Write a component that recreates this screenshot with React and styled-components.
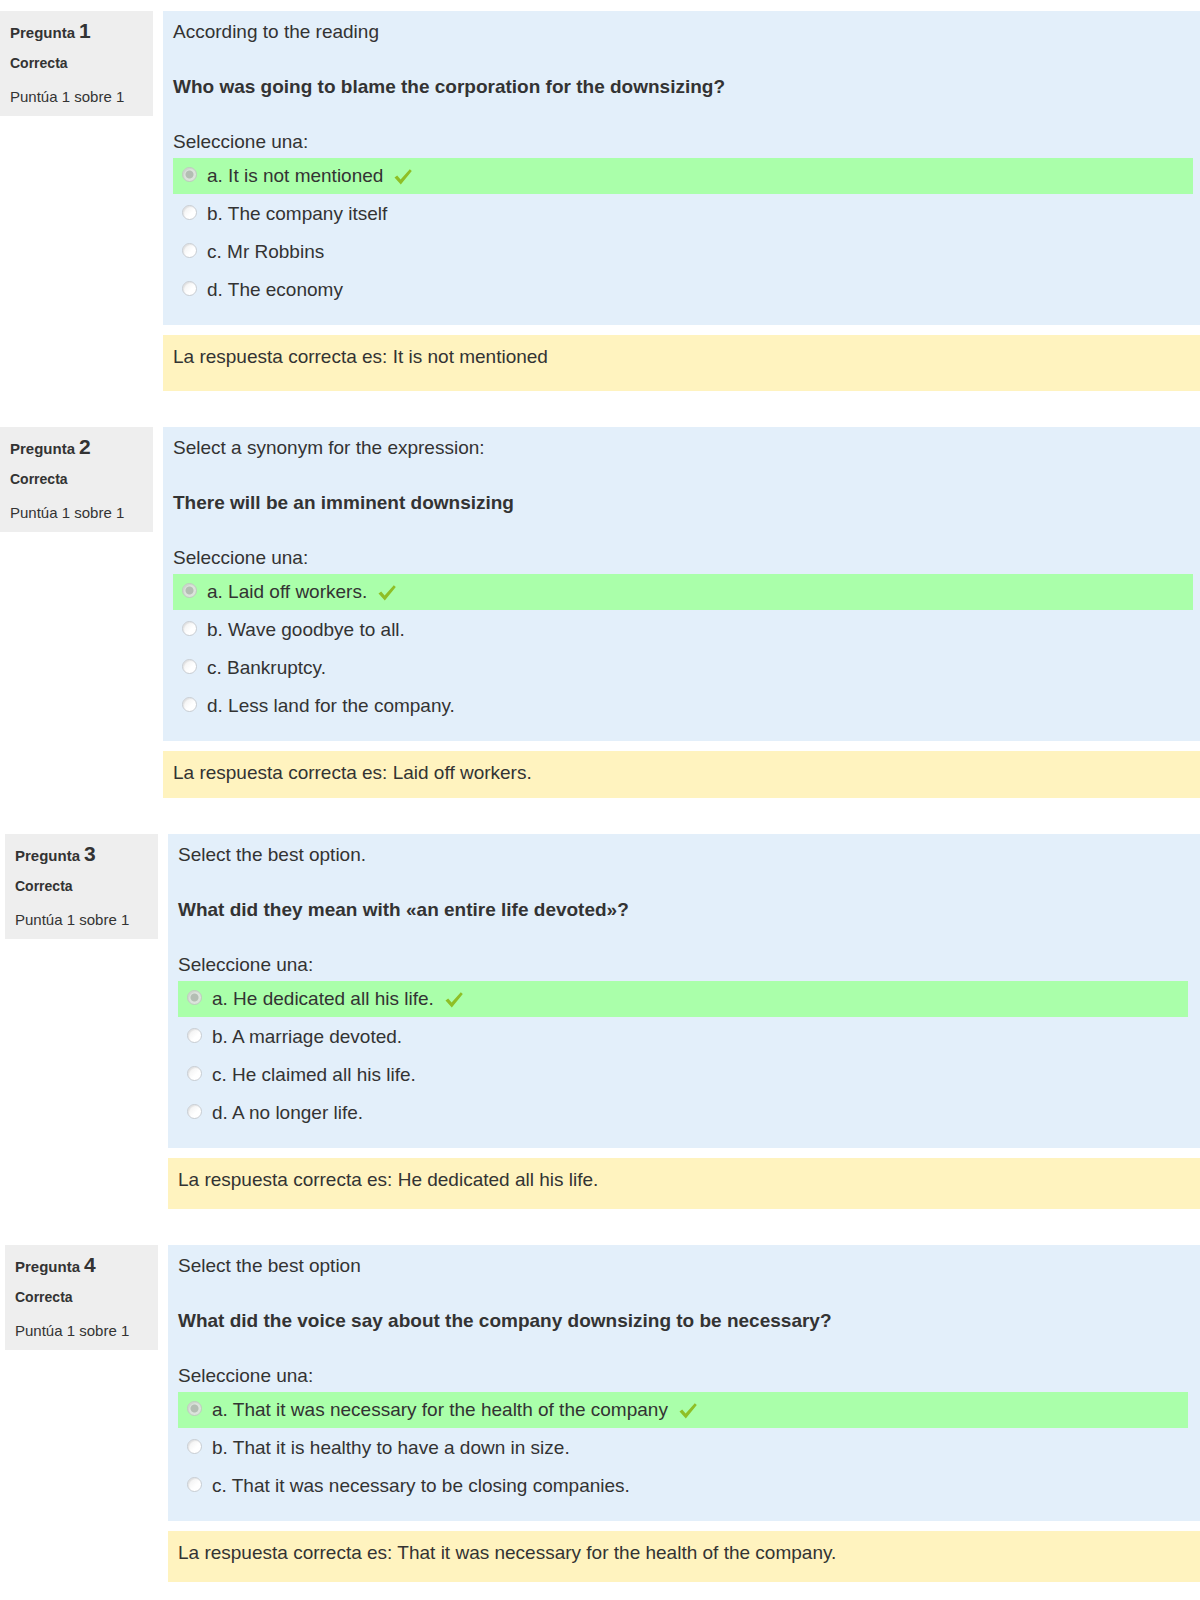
import React from "react";
import styled, { createGlobalStyle } from "styled-components";

const GlobalStyle = createGlobalStyle`
  html, body { margin: 0; padding: 0; background: #ffffff; }
  body {
    font-family: "Liberation Sans", Arial, Helvetica, sans-serif;
    color: #333333;
    overflow-x: hidden;
  }
`;

const Page = styled.div`
  display: flex;
  flex-direction: column;
  padding-top: 11px;
  width: 1200px;
  overflow: hidden;
`;

const Question = styled.div`
  display: flex;
  align-items: flex-start;
  padding-left: ${(p) => p.$offset}px;
  margin-bottom: 36px;
`;

const Info = styled.div`
  flex: none;
  width: 153px;
  box-sizing: border-box;
  padding: 9px 10px 10px 10px;
  background: #eeeeee;
  color: #333333;
`;

const InfoTitle = styled.div`
  display: flex;
  align-items: baseline;
  height: 22px;
  font-size: 15px;
  font-weight: bold;
  line-height: 22px;
`;

const QNumber = styled.span`
  font-size: 21px;
  line-height: 22px;
  font-weight: bold;
  margin-left: 4px;
`;

const State = styled.div`
  margin-top: 12px;
  font-size: 14px;
  font-weight: bold;
  line-height: 18px;
`;

const Grade = styled.div`
  margin-top: 16px;
  font-size: 15px;
  line-height: 18px;
`;

const Content = styled.div`
  flex: 1;
  min-width: 0;
  margin-left: 10px;
  display: flex;
  flex-direction: column;
  gap: 10px;
`;

const Formulation = styled.div`
  background: #e3effa;
  padding: 10px ${(p) => p.$inset}px 17px 10px;
`;

const QText = styled.p`
  margin: 0 0 33px 0;
  font-size: 19px;
  line-height: 22px;
  font-weight: ${(p) => (p.$bold ? "bold" : "normal")};
  color: #333333;
`;

const Prompt = styled.div`
  margin: 0 0 5px 0;
  font-size: 19px;
  line-height: 22px;
`;

const Answers = styled.div`
  display: flex;
  flex-direction: column;
  gap: 2px;
`;

const AnswerRow = styled.div`
  height: 36px;
  display: flex;
  align-items: center;
  padding-left: 9px;
  background: ${(p) => (p.$correct ? "#aaffaa" : "transparent")};
  font-size: 19px;
  color: #333333;
  white-space: nowrap;
`;

const Radio = styled.span`
  flex: none;
  width: 15px;
  height: 15px;
  box-sizing: border-box;
  border-radius: 50%;
  border: 1px solid ${(p) => (p.$checked ? "#bfcabf" : "#c9cdd2")};
  background: ${(p) =>
    p.$checked
      ? "radial-gradient(circle at 50% 50%, #b3beb3 0 3.5px, #dbe3db 4.5px)"
      : "linear-gradient(135deg, #ededed 0%, #ffffff 60%)"};
  box-shadow: inset 1px 1px 1px rgba(0, 0, 0, 0.07);
  margin-top: -4px;
`;

const AnswerLabel = styled.span`
  margin-left: 10px;
`;

const CheckIcon = styled.svg`
  flex: none;
  margin-left: 10px;
  width: 20px;
  height: 20px;
  margin-top: 2px;
`;

const Outcome = styled.div`
  background: #fff3bf;
  padding: 11px 10px ${(p) => p.$pb}px 10px;
  font-size: 19px;
  line-height: 22px;
  color: #333333;
`;

const Check = () => (
  <CheckIcon viewBox="0 0 20 20">
    <path d="M1.5 10.5 L4.2 8.4 L7.6 12.6 L16.8 2.2 L18.8 3.9 L7.8 17.4 Z" fill="#8fbf26" />
  </CheckIcon>
);

const questions = [
  {
    n: 1,
    offset: 0,
    inset: 7,
    pb: 23,
    intro: "According to the reading",
    stem: "Who was going to blame the corporation for the downsizing?",
    answers: ["a. It is not mentioned", "b. The company itself", "c. Mr Robbins", "d. The economy"],
    right: "It is not mentioned",
  },
  {
    n: 2,
    offset: 0,
    inset: 7,
    pb: 14,
    intro: "Select a synonym for the expression:",
    stem: "There will be an imminent downsizing",
    answers: ["a. Laid off workers.", "b. Wave goodbye to all.", "c. Bankruptcy.", "d. Less land for the company."],
    right: "Laid off workers.",
  },
  {
    n: 3,
    offset: 5,
    inset: 12,
    pb: 18,
    intro: "Select the best option.",
    stem: "What did they mean with «an entire life devoted»?",
    answers: ["a. He dedicated all his life.", "b. A marriage devoted.", "c. He claimed all his life.", "d. A no longer life."],
    right: "He dedicated all his life.",
  },
  {
    n: 4,
    offset: 5,
    inset: 12,
    pb: 18,
    intro: "Select the best option",
    stem: "What did the voice say about the company downsizing to be necessary?",
    answers: [
      "a. That it was necessary for the health of the company",
      "b. That it is healthy to have a down in size.",
      "c. That it was necessary to be closing companies.",
    ],
    right: "That it was necessary for the health of the company.",
  },
];

export default function App() {
  return (
    <>
      <GlobalStyle />
      <Page>
        {questions.map((q) => (
          <Question key={q.n} $offset={q.offset}>
            <Info>
              <InfoTitle>
                Pregunta<QNumber>{q.n}</QNumber>
              </InfoTitle>
              <State>Correcta</State>
              <Grade>Puntúa 1 sobre 1</Grade>
            </Info>
            <Content>
              <Formulation $inset={q.inset}>
                <QText>{q.intro}</QText>
                <QText $bold>{q.stem}</QText>
                <Prompt>Seleccione una:</Prompt>
                <Answers>
                  {q.answers.map((a, i) => (
                    <AnswerRow key={a} $correct={i === 0}>
                      <Radio $checked={i === 0} />
                      <AnswerLabel>{a}</AnswerLabel>
                      {i === 0 && <Check />}
                    </AnswerRow>
                  ))}
                </Answers>
              </Formulation>
              <Outcome $pb={q.pb}>La respuesta correcta es: {q.right}</Outcome>
            </Content>
          </Question>
        ))}
      </Page>
    </>
  );
}
